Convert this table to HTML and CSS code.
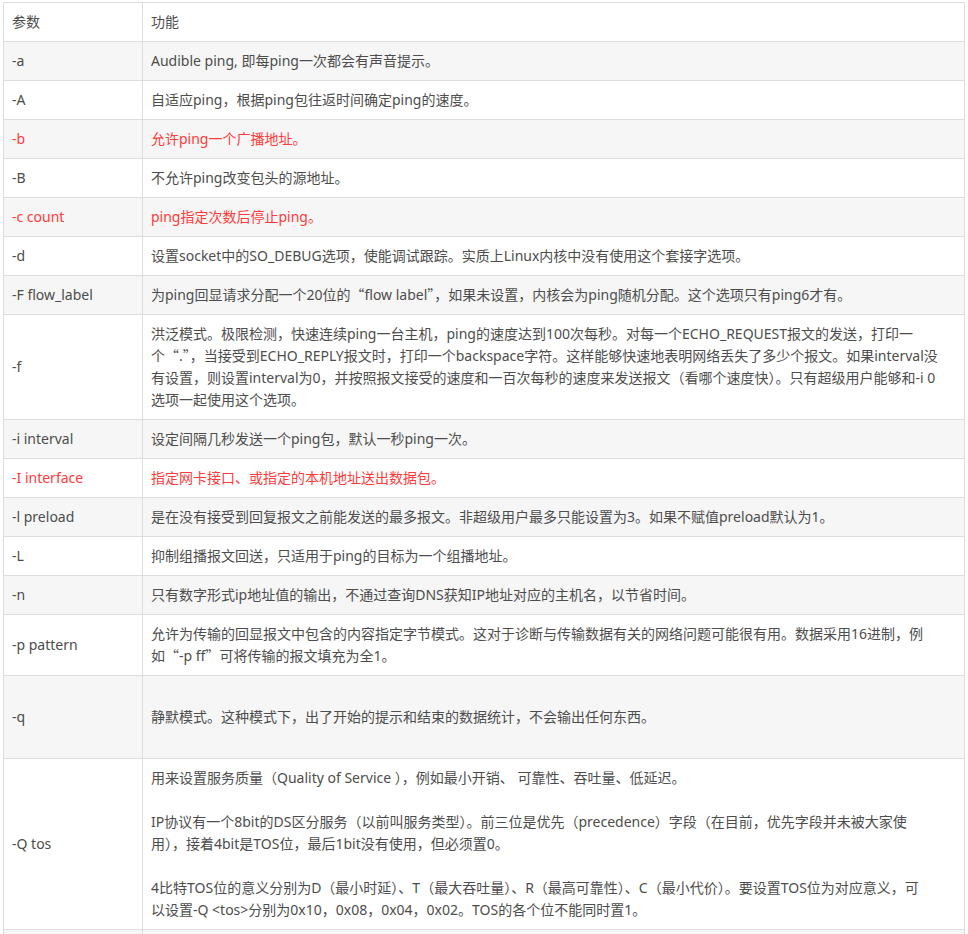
FILE: index.html
```html
<!DOCTYPE html>
<html lang="zh-CN">
<head>
<meta charset="utf-8">
<title>ping 参数</title>
<link rel="stylesheet" href="styles.css">
</head>
<body>
<table class="params">
  <colgroup><col class="c-opt"><col class="c-desc"></colgroup>
  <thead>
    <tr><th>参数</th><th>功能</th></tr>
  </thead>
  <tbody>
    <tr><td>-a</td><td>Audible ping, 即每ping一次都会有声音提示。</td></tr>
    <tr><td>-A</td><td>自适应ping，根据ping包往返时间确定ping的速度。</td></tr>
    <tr class="hl"><td>-b</td><td>允许ping一个广播地址。</td></tr>
    <tr><td>-B</td><td>不允许ping改变包头的源地址。</td></tr>
    <tr class="hl"><td>-c count</td><td>ping指定次数后停止ping。</td></tr>
    <tr><td>-d</td><td>设置socket中的SO_DEBUG选项，使能调试跟踪。实质上Linux内核中没有使用这个套接字选项。</td></tr>
    <tr><td>-F flow_label</td><td>为ping回显请求分配一个20位的<span class="cjk">“</span>flow label<span class="cjk">”</span>，如果未设置，内核会为ping随机分配。这个选项只有ping6才有。</td></tr>
    <tr><td>-f</td><td>洪泛模式。极限检测，快速连续ping一台主机，ping的速度达到100次每秒。对每一个ECHO_REQUEST报文的发送，打印一<br>个<span class="cjk">“</span>.<span class="cjk">”</span>，当接受到ECHO_REPLY报文时，打印一个backspace字符。这样能够快速地表明网络丢失了多少个报文。如果interval没<br>有设置，则设置interval为0，并按照报文接受的速度和一百次每秒的速度来发送报文（看哪个速度快）。只有超级用户能够和-i 0<br>选项一起使用这个选项。</td></tr>
    <tr><td>-i interval</td><td>设定间隔几秒发送一个ping包，默认一秒ping一次。</td></tr>
    <tr class="hl"><td>-I interface</td><td>指定网卡接口、或指定的本机地址送出数据包。</td></tr>
    <tr><td>-l preload</td><td>是在没有接受到回复报文之前能发送的最多报文。非超级用户最多只能设置为3。如果不赋值preload默认为1。</td></tr>
    <tr><td>-L</td><td>抑制组播报文回送，只适用于ping的目标为一个组播地址。</td></tr>
    <tr><td>-n</td><td>只有数字形式ip地址值的输出，不通过查询DNS获知IP地址对应的主机名，以节省时间。</td></tr>
    <tr><td>-p pattern</td><td>允许为传输的回显报文中包含的内容指定字节模式。这对于诊断与传输数据有关的网络问题可能很有用。数据采用16进制，例<br>如<span class="cjk">“</span>-p ff<span class="cjk">”</span>可将传输的报文填充为全1。</td></tr>
    <tr><td>-q</td><td><p class="gap"></p><p>静默模式。这种模式下，出了开始的提示和结束的数据统计，不会输出任何东西。</p><p class="gap"></p></td></tr>
    <tr><td>-Q tos</td><td><p>用来设置服务质量（Quality of Service ），例如最小开销、 可靠性、吞吐量、低延迟。</p><p class="gap"></p><p>IP协议有一个8bit的DS区分服务（以前叫服务类型）。前三位是优先（precedence）字段（在目前，优先字段并未被大家使<br>用），接着4bit是TOS位，最后1bit没有使用，但必须置0。</p><p class="gap"></p><p>4比特TOS位的意义分别为D（最小时延）、T（最大吞吐量）、R（最高可靠性）、C（最小代价）。要设置TOS位为对应意义，可<br>以设置-Q &lt;tos&gt;分别为0x10，0x08，0x04，0x02。TOS的各个位不能同时置1。</p></td></tr>
    <tr class="empty"><td></td><td></td></tr>
  </tbody>
</table>
</body>
</html>
```

FILE: styles.css
```css
html, body {
  margin: 0;
  padding: 0;
  background: #ffffff;
}

body {
  padding: 2px 3px;
  font-family: "Noto Sans", "Noto Sans CJK SC", sans-serif;
  font-size: 14px;
  line-height: 22px;
  color: #4d4d4d;
}

.params {
  width: 962px;
  border-collapse: collapse;
  table-layout: fixed;
}

.c-opt { width: 139px; }

.params th,
.params td {
  border: 1px solid #dddddd;
  padding: 8px;
  text-align: left;
  vertical-align: middle;
  font-weight: normal;
  white-space: normal;
}

.params tbody tr:nth-child(odd) {
  background: #f6f6f6;
}

.params tbody tr:nth-child(even) {
  background: #ffffff;
}

.params tr.hl td {
  color: #ff3b3b;
}

.params tr.empty td {
  height: 22px;
}

.params p {
  margin: 0;
}

.params p.gap {
  height: 22px;
}

.cjk {
  font-family: "Noto Sans CJK SC", sans-serif;
  line-height: 0;
}
```
